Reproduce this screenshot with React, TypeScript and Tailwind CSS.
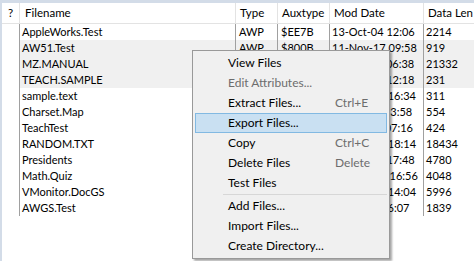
import React from 'react';

type Row = { name: string; type: string; aux: string; date: string; len: string };

const rows: Row[] = [
  { name: 'AppleWorks.Test', type: 'AWP', aux: '$EE7B', date: '13-Oct-04 12:06', len: '2214' },
  { name: 'AW51.Test', type: 'AWP', aux: '$800B', date: '11-Nov-17 09:58', len: '919' },
  { name: 'MZ.MANUAL', type: 'TXT', aux: '$0000', date: '27-Apr-90 06:38', len: '21332' },
  { name: 'TEACH.SAMPLE', type: 'GWP', aux: '$5445', date: '03-Feb-92 12:18', len: '231' },
  { name: 'sample.text', type: 'TXT', aux: '$0000', date: '14-Aug-91 16:34', len: '311' },
  { name: 'Charset.Map', type: 'TXT', aux: '$0000', date: '09-Jan-93 13:58', len: '554' },
  { name: 'TeachTest', type: 'GWP', aux: '$5445', date: '22-Jun-95 07:16', len: '424' },
  { name: 'RANDOM.TXT', type: 'TXT', aux: '$0000', date: '05-Mar-89 18:14', len: '18434' },
  { name: 'Presidents', type: 'ADB', aux: '$0000', date: '30-Sep-88 17:48', len: '4780' },
  { name: 'Math.Quiz', type: 'BAS', aux: '$0801', date: '18-May-90 16:56', len: '4048' },
  { name: 'VMonitor.DocGS', type: 'TXT', aux: '$0000', date: '11-Dec-94 14:04', len: '5996' },
  { name: 'AWGS.Test', type: 'GWP', aux: '$8010', date: '01-Jul-97 16:07', len: '1839' },
];

const selected = new Set([1, 2, 3]);

type Item = { label: string; key?: string; disabled?: boolean; hot?: boolean; sep?: boolean };

const menu: Item[] = [
  { label: 'View Files' },
  { label: 'Edit Attributes...', disabled: true },
  { label: 'Extract Files...', key: 'Ctrl+E' },
  { label: 'Export Files...', hot: true },
  { label: 'Copy', key: 'Ctrl+C' },
  { label: 'Delete Files', key: 'Delete' },
  { label: 'Test Files' },
  { label: '', sep: true },
  { label: 'Add Files...' },
  { label: 'Import Files...' },
  { label: 'Create Directory...' },
];

export default function App() {
  return (
    <div
      className="relative w-[474px] h-[261px] overflow-hidden bg-white text-[11.5px] text-black border-t-[3px] border-l-2 border-[#d3dce8]"
      style={{ fontFamily: 'Lato, "Liberation Sans", sans-serif' }}
    >
      {/* header */}
      <div className="flex h-[21px] border-b border-[#e3e3e3] whitespace-nowrap">
        <div className="w-[18px] shrink-0 pl-[6px] leading-[20px] border-r border-[#e3e3e3]">?</div>
        <div className="w-[216px] shrink-0 pl-[5px] leading-[20px] border-r border-[#e3e3e3]">Filename</div>
        <div className="w-[42px] shrink-0 pl-[4px] leading-[20px] border-r border-[#e3e3e3]">Type</div>
        <div className="w-[52px] shrink-0 pl-[4px] leading-[20px] border-r border-[#e3e3e3]">Auxtype</div>
        <div className="w-[94px] shrink-0 pl-[4px] leading-[20px] border-r border-[#e3e3e3]">Mod Date</div>
        <div className="shrink-0 pl-[4px] leading-[20px]">Data Len</div>
      </div>

      {/* rows */}
      <div className="flex flex-col text-[11px]">
        {rows.map((r, i) => (
          <div key={r.name} className="flex h-[16px] leading-[16px] whitespace-nowrap">
            <div className="w-[18px] shrink-0 border-r border-[#a0a0a0]" />
            <div className={`flex flex-1 ${selected.has(i) ? 'bg-[#f0f0f0]' : 'bg-white'}`}>
              <div className="w-[216px] shrink-0 pl-[2px] border-r border-[#a0a0a0]">{r.name}</div>
              <div className="w-[42px] shrink-0 pl-[3px] border-r border-[#a0a0a0]">{r.type}</div>
              <div className="w-[52px] shrink-0 pl-[3px] border-r border-[#a0a0a0]">{r.aux}</div>
              <div className="w-[94px] shrink-0 pl-[2px] border-r border-[#a0a0a0]">{r.date}</div>
              <div className="w-[60px] shrink-0 pl-[2px]">{r.len}</div>
            </div>
          </div>
        ))}
      </div>

      {/* context menu */}
      <div className="absolute left-[190px] top-[47px] w-[198px] py-[2px] bg-[#f0f0f0] border border-[#999999] shadow-[2px_2px_2px_rgba(0,0,0,0.35)] text-[12px] whitespace-nowrap">
        {menu.map((m, i) =>
          m.sep ? (
            <div key={i} className="h-[3px] flex items-center pl-[30px] pr-[2px]">
              <div className="h-px w-full bg-[#d7d7d7]" />
            </div>
          ) : (
            <div
              key={i}
              className={`flex items-center h-[20px] mx-[2px] pl-[32px] border ${
                m.hot ? 'bg-[#c9e0f2] border-[#82b9e2]' : 'border-transparent'
              } ${m.disabled ? 'text-[#6d6d6d]' : 'text-black'}`}
            >
              <span className="w-[107px]">{m.label}</span>
              {m.key && <span className="text-[#6d6d6d]">{m.key}</span>}
            </div>
          )
        )}
      </div>
    </div>
  );
}
